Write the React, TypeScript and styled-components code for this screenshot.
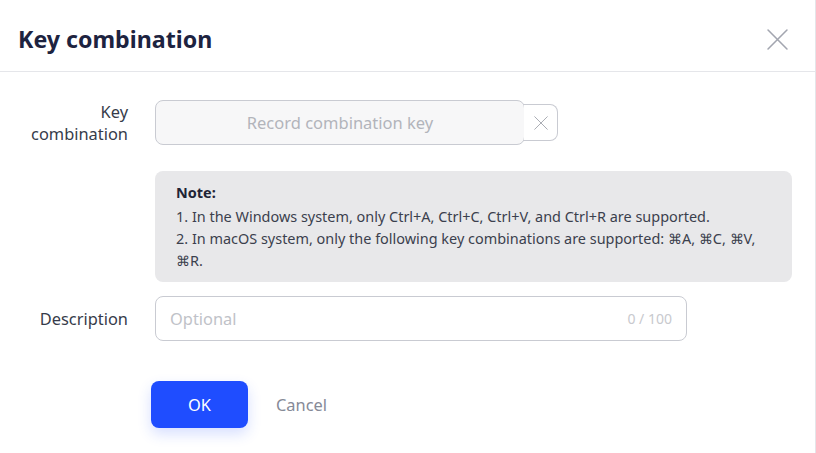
import React from 'react';
import styled, { createGlobalStyle } from 'styled-components';

const GlobalStyle = createGlobalStyle`
  html, body {
    margin: 0;
    padding: 0;
    background: #ffffff;
  }
  body {
    font-family: 'Noto Sans', 'Open Sans', Arial, sans-serif;
    -webkit-font-smoothing: antialiased;
  }
  * {
    box-sizing: border-box;
  }
`;

const Dialog = styled.div`
  width: 816px;
  height: 453px;
  background: #ffffff;
  border-right: 1px solid #e4e5e9;
  display: flex;
  flex-direction: column;
`;

const Header = styled.header`
  height: 72px;
  display: flex;
  align-items: center;
  justify-content: space-between;
  padding: 7px 27px 0 18px;
  border-bottom: 1px solid #e5e6ea;
`;

const Title = styled.h1`
  margin: 0;
  font-size: 23.2px;
  font-weight: 700;
  color: #1d2340;
  letter-spacing: 0;
`;

const CloseButton = styled.button`
  width: 22px;
  height: 22px;
  padding: 0;
  border: none;
  background: transparent;
  display: flex;
  align-items: center;
  justify-content: center;
  cursor: pointer;
`;

const Body = styled.div`
  padding: 28px 23px 0 0;
  display: flex;
  flex-direction: column;
`;

const FormRow = styled.div<{ $gap?: number }>`
  display: grid;
  grid-template-columns: 128px 1fr;
  column-gap: 27px;
  align-items: center;
  margin-bottom: ${p => p.$gap ?? 0}px;
`;

const Label = styled.label`
  text-align: right;
  font-size: 16.4px;
  line-height: 22px;
  color: #363b4a;
`;

const KeyGroup = styled.div`
  display: flex;
  align-items: center;
`;

const RecordInput = styled.div`
  width: 370px;
  height: 45px;
  border: 1px solid #c9cbd2;
  border-radius: 8px;
  background: #f7f7f8;
  display: flex;
  align-items: center;
  justify-content: center;
  font-size: 16.5px;
  color: #b2b4bb;
`;

const ClearButton = styled.button`
  width: 34px;
  height: 37px;
  margin-left: -1px;
  padding: 0;
  border: 1px solid #c9cbd2;
  border-left: none;
  border-radius: 0 8px 8px 0;
  background: #ffffff;
  display: flex;
  align-items: center;
  justify-content: center;
`;

const NoteBox = styled.div`
  grid-column: 2;
  background: #e8e8ea;
  border-radius: 8px;
  padding: 11px 20px 10px 21px;
  font-size: 14.45px;
  line-height: 22px;
  color: #3b404d;
`;

const NoteTitle = styled.div`
  font-weight: 700;
  color: #1f2436;
  margin-bottom: 2px;
`;

const TextField = styled.div`
  width: 532px;
  height: 45px;
  border: 1px solid #c9cbd2;
  border-radius: 8px;
  background: #ffffff;
  display: flex;
  align-items: center;
  justify-content: space-between;
  padding: 0 14px 0 14px;
`;

const Placeholder = styled.span`
  font-size: 16.4px;
  color: #c0c2c8;
`;

const Counter = styled.span`
  font-size: 14px;
  color: #c8c9ce;
`;

const Actions = styled.div`
  display: flex;
  align-items: center;
  gap: 28px;
  padding-left: 151px;
  margin-top: 40px;
`;

const PrimaryButton = styled.button`
  width: 97px;
  height: 47px;
  border: none;
  border-radius: 8px;
  background: #1f4dff;
  color: #ffffff;
  font-family: inherit;
  font-size: 16.4px;
  box-shadow: 0 6px 14px rgba(31, 77, 255, 0.18);
  cursor: pointer;
`;

const TextButton = styled.button`
  border: none;
  background: transparent;
  padding: 0;
  font-family: inherit;
  font-size: 16.4px;
  color: #868a97;
  cursor: pointer;
`;

const Cross = ({ size, color, width }: { size: number; color: string; width: number }) => (
  <svg width={size} height={size} viewBox="0 0 20 20" fill="none">
    <path d="M1 1L19 19M19 1L1 19" stroke={color} strokeWidth={width} strokeLinecap="round" />
  </svg>
);

export default function App() {
  return (
    <>
      <GlobalStyle />
      <Dialog>
        <Header>
          <Title>Key combination</Title>
          <CloseButton aria-label="Close">
            <Cross size={21} color="#a3a6b0" width={1.5} />
          </CloseButton>
        </Header>
        <Body>
          <FormRow $gap={26}>
            <Label>
              Key
              <br />
              combination
            </Label>
            <KeyGroup>
              <RecordInput>Record combination key</RecordInput>
              <ClearButton aria-label="Clear">
                <Cross size={14} color="#a8abb3" width={1.4} />
              </ClearButton>
            </KeyGroup>
          </FormRow>
          <FormRow $gap={14}>
            <NoteBox>
              <NoteTitle>Note:</NoteTitle>
              <div>1. In the Windows system, only Ctrl+A, Ctrl+C, Ctrl+V, and Ctrl+R are supported.</div>
              <div>2. In macOS system, only the following key combinations are supported: ⌘A, ⌘C, ⌘V, ⌘R.</div>
            </NoteBox>
          </FormRow>
          <FormRow>
            <Label>Description</Label>
            <TextField>
              <Placeholder>Optional</Placeholder>
              <Counter>0 / 100</Counter>
            </TextField>
          </FormRow>
          <Actions>
            <PrimaryButton>OK</PrimaryButton>
            <TextButton>Cancel</TextButton>
          </Actions>
        </Body>
      </Dialog>
    </>
  );
}
